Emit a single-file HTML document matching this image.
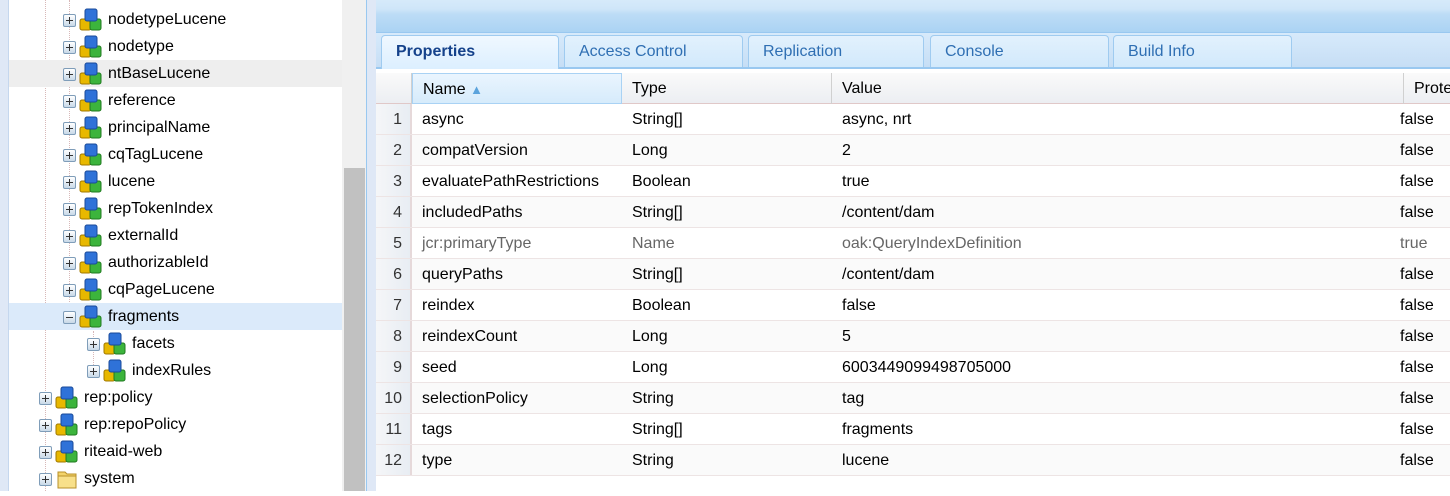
<!DOCTYPE html>
<html><head><style>
body{margin:0;width:1450px;height:491px;overflow:hidden;font-family:"Liberation Sans",Arial,sans-serif;font-size:16px;color:#000;position:relative;background:#fff}
.lb{position:absolute;left:0;top:0;width:8px;height:491px;background:#dfe8f6;border-right:1px solid #c5d7ee}
.tree{position:absolute;left:9px;top:0;width:333px;height:491px;background:#fff}
.vl{position:absolute;border-left:1px dotted #d8b8b8}
.row{position:absolute;left:0;width:333px;height:27px}
.pm{position:absolute;width:11px;height:11px;border:1px solid #7f9db9;border-radius:2px;background:linear-gradient(#fff,#c9d9e8);top:7px}
.pm:before{content:"";position:absolute;left:2px;top:5px;width:7px;height:1px;background:#333}
.pm.p:after{content:"";position:absolute;left:5px;top:2px;width:1px;height:7px;background:#333}
.ic{position:absolute;top:2px}
.t{position:absolute;top:4px;font-size:16px}
.sb{position:absolute;left:342px;top:0;width:24px;height:491px;background:#f0f0f0}
.th{position:absolute;left:344px;top:168px;width:21px;height:323px;background:#c1c1c1}
.sp{position:absolute;left:366px;top:0;width:10px;height:491px;background:#dfe8f6;border-left:1px solid #99c8f0;box-sizing:border-box}
.top{position:absolute;left:376px;top:0;width:1074px;height:32px;background:linear-gradient(#d6eafa 0,#cfe6f9 9px,#bddcf6 14px,#abd3f3 32px);border-bottom:1px solid #99c8f0}
.tb{position:absolute;left:376px;top:33px;width:1074px;height:34px;background:linear-gradient(#d7eafb,#c6def5);border-bottom:2px solid #99c8f0}
.tab{position:absolute;top:35px;height:32px;border:1px solid #9fcbf0;border-bottom:none;border-radius:4px 4px 0 0;background:linear-gradient(#e2f1fd,#d2e9fb);box-sizing:border-box;color:#2f6fb3;font-size:16px;padding:7px 0 0 14px}
.tab.a{background:linear-gradient(#f0f8ff,#dcefff);color:#15428b;font-weight:bold;height:34px}
.tbl{position:absolute;left:376px;top:69px;width:1074px;height:422px;background:#fff}
.hd{position:absolute;top:4px;height:31px;background:linear-gradient(#fafafa,#eceef2);border-bottom:1px solid #e0c8c8;box-sizing:border-box}
.hc{position:absolute;top:0;height:31px;border-right:1px solid #d0d0d0;box-sizing:border-box;padding:7px 0 0 10px;color:#000}
.r{position:absolute;left:0;width:1074px;height:31px;border-bottom:1px solid #ede4e4;box-sizing:border-box}
.r.e{background:#fafafa}
.r div{position:absolute;top:7px}
.n{left:0;width:36px!important;top:0!important;height:30px;background:linear-gradient(90deg,#f5f6f8,#e8edf3);border-right:2px solid #e6d9da;box-sizing:border-box;text-align:right;padding:7px 8px 0 0;color:#333}
.g{color:#666}
</style></head><body>
<div class="lb"></div>
<div class="tree">
<div class="vl" style="left:36px;top:0;height:491px"></div>
<div class="vl" style="left:60px;top:0;height:316px"></div>
<div class="vl" style="left:84px;top:331px;height:40px"></div>
<div class="row" style="top:60px;background:#eeeeee"></div>
<div class="row" style="top:303px;background:#dbeafa"></div>
</div>
<div id="items"></div>
<div class="sb"></div><div class="th"></div>
<div class="sp"></div>
<div class="top"></div>
<div class="tb"></div>
<div class="tab a" style="left:381px;width:178px">Properties</div>
<div class="tab" style="left:564px;width:179px">Access Control</div>
<div class="tab" style="left:748px;width:176px">Replication</div>
<div class="tab" style="left:930px;width:179px">Console</div>
<div class="tab" style="left:1113px;width:179px">Build Info</div>
<div class="tbl">
<div class="hd" style="left:0;width:1074px">
<div class="hc" style="left:0;width:36px"></div>
<div class="hc" style="left:36px;width:210px;background:linear-gradient(#eaf5fe,#d6ebfb);border:1px solid #a9d2f4">Name <span style="color:#5ba3dc;font-size:13px">▲</span></div>
<div class="hc" style="left:246px;width:210px">Type</div>
<div class="hc" style="left:456px;width:572px">Value</div>
<div class="hc" style="left:1028px;width:60px">Prote</div>
</div>
<div id="rows"></div>
</div>
<script>
var ic='<svg width="24" height="24" viewBox="0 0 24 24"><rect x="1" y="11" width="11" height="11" rx="2" fill="#e8b800" stroke="#a07800"/><rect x="11" y="11" width="11" height="11" rx="2" fill="#3cb43c" stroke="#1f7a1f"/><rect x="6" y="1" width="12" height="12" rx="2" fill="#2f72d8" stroke="#1a4a9a"/></svg>';
var fo='<svg width="24" height="24" viewBox="0 0 24 24"><path d="M3 5h7l2 2h9v14H3z" fill="#f3d36a" stroke="#b8902a"/><path d="M3 9h18v12H3z" fill="#f8e08a" stroke="#b8902a"/></svg>';
var items=[["nodetypeLucene",2],["nodetype",2],["ntBaseLucene",2],["reference",2],["principalName",2],["cqTagLucene",2],["lucene",2],["repTokenIndex",2],["externalId",2],["authorizableId",2],["cqPageLucene",2],["fragments",2,1],["facets",3],["indexRules",3],["rep:policy",1],["rep:repoPolicy",1],["riteaid-web",1],["system",1,0,1]];
var h='';items.forEach(function(it,i){var y=7+i*27,px=39+(it[1]-1)*24;
h+='<div class="pm '+(it[2]?'':'p')+'" style="left:'+px+'px;top:'+(y+7)+'px"></div><div class="ic" style="position:absolute;left:'+(px+16)+'px;top:'+(y+1)+'px">'+(it[3]?fo:ic)+'</div><div class="t" style="left:'+(px+45)+'px;top:'+(y+4)+'px">'+it[0]+'</div>';});
document.getElementById('items').innerHTML=h;
var rows=[["async","String[]","async, nrt","false"],["compatVersion","Long","2","false"],["evaluatePathRestrictions","Boolean","true","false"],["includedPaths","String[]","/content/dam","false"],["jcr:primaryType","Name","oak:QueryIndexDefinition","true",1],["queryPaths","String[]","/content/dam","false"],["reindex","Boolean","false","false"],["reindexCount","Long","5","false"],["seed","Long","6003449099498705000","false"],["selectionPolicy","String","tag","false"],["tags","String[]","fragments","false"],["type","String","lucene","false"]];
var r='';rows.forEach(function(x,i){var c=x[4]?' class="g"':'';
r+='<div class="r'+(i%2?' e':'')+'" style="top:'+(35+i*31)+'px"><div class="n">'+(i+1)+'</div><div'+c+' style="left:46px">'+x[0]+'</div><div'+c+' style="left:256px">'+x[1]+'</div><div'+c+' style="left:466px">'+x[2]+'</div><div'+c+' style="left:1024px">'+x[3]+'</div></div>';});
document.getElementById('rows').innerHTML=r;
</script>
</body></html>
